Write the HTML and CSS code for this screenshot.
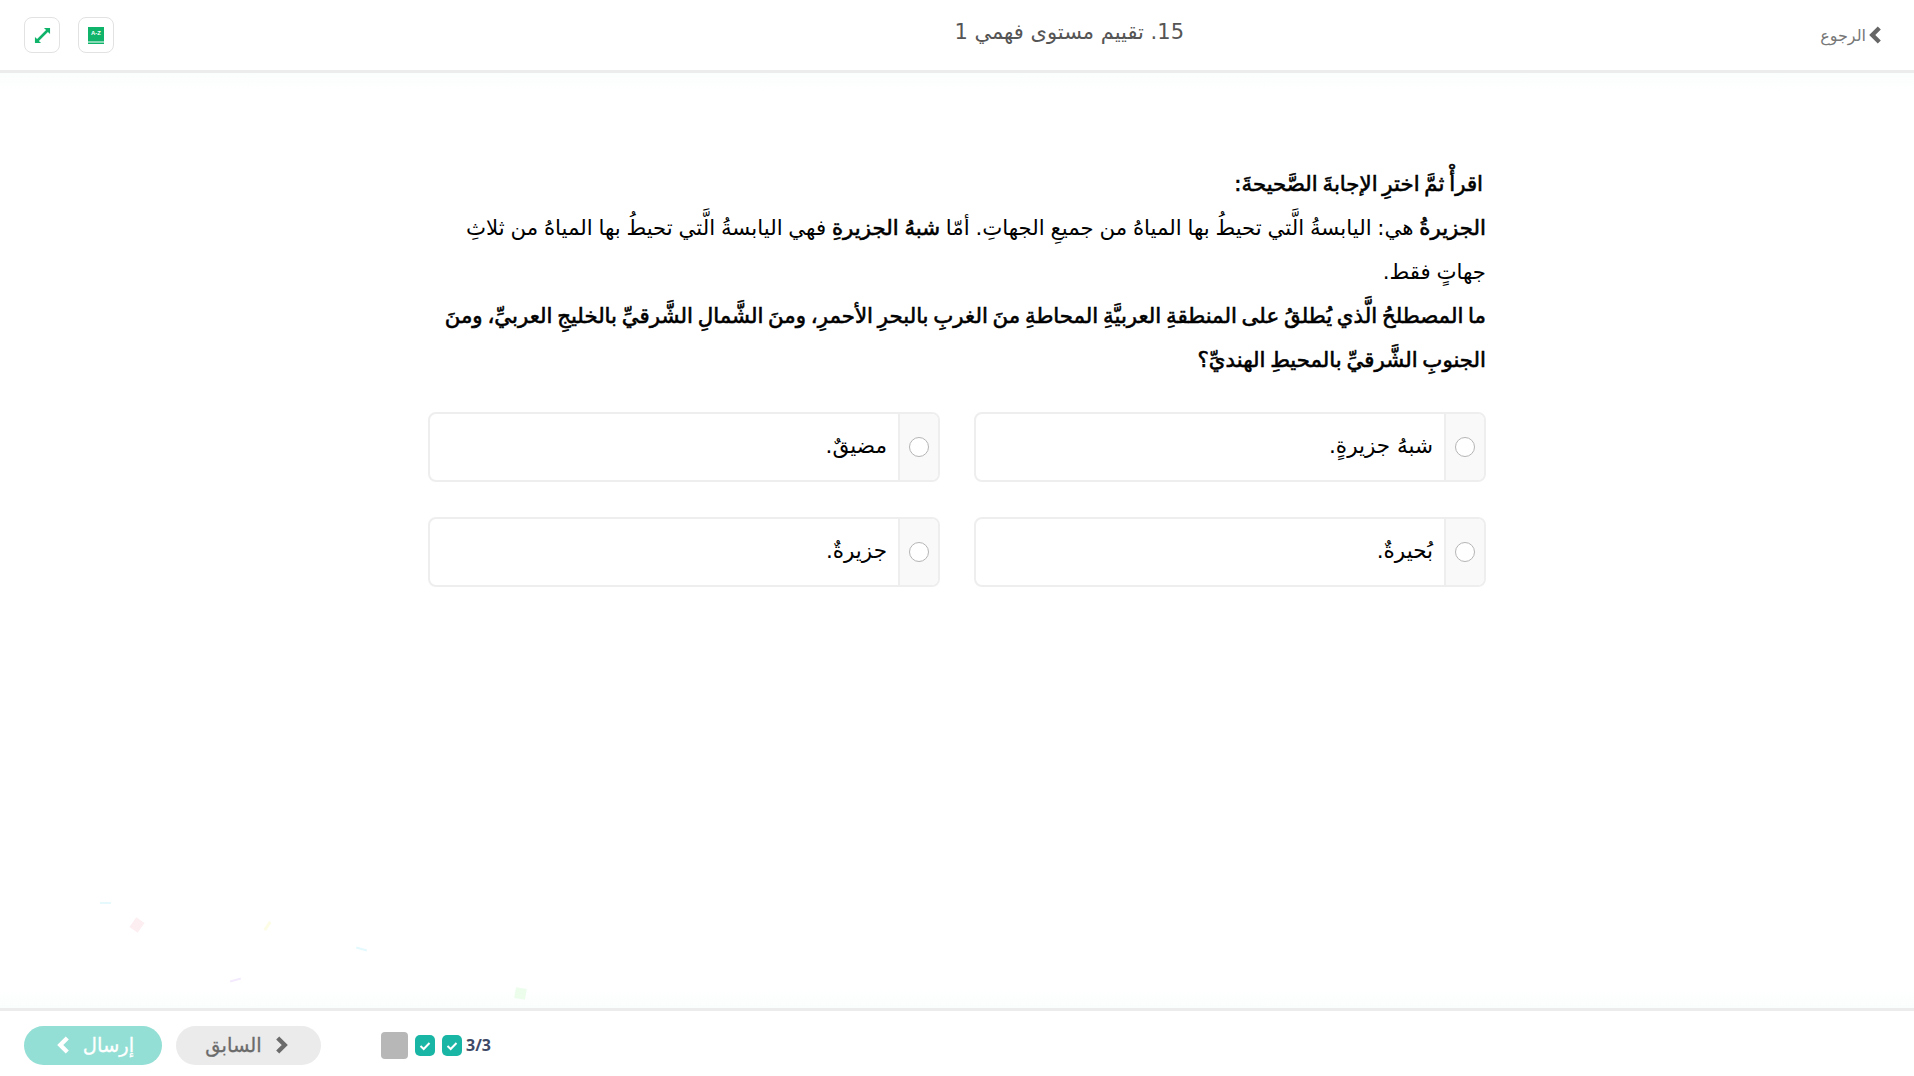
FILE: index.html
```html
<!DOCTYPE html>
<html lang="ar" dir="rtl">
<head>
    <meta charset="UTF-8">
    <title>15. تقييم مستوى فهمي 1</title>
    <link rel="stylesheet" href="styles.css">
</head>
<body>

    <header class="topbar">
        <a class="back-link" href="#">
            <svg class="back-chevron" viewBox="0 0 12 18"><path d="M9.500 2.500 3 9l6.500 6.500" /></svg>
            <span>الرجوع</span>
        </a>
        <h1 class="lesson-title">15. تقييم مستوى فهمي 1</h1>
        <div class="tools">
            <button class="tool-button">
                <svg viewBox="0 0 16 17" class="book-icon">
                    <rect x="0" y="0" width="16" height="14.500" />
                    <rect x="0" y="15.500" width="16" height="1.500" />
                </svg>
                <span class="book-label">A-Z</span>
            </button>
            <button class="tool-button">
                <svg viewBox="0 0 18 18" class="expand-icon">
                    <path d="M17 1v6.500l-2.300-2.300-9.500 9.500L7.500 17H1v-6.500l2.300 2.300 9.500-9.500L10.500 1z" />
                </svg>
            </button>
        </div>
    </header>

    <main class="stage">
        <section class="quiz">
            <div class="question">
                <p class="strong lead">اقرأْ ثمَّ اخترِ الإجابةَ الصَّحيحةَ:</p>
                <p><strong>الجزيرةُ</strong> هي: اليابسةُ الَّتي تحيطُ بها المياهُ من جميعِ الجهاتِ. أمّا <strong>شبهُ الجزيرةِ</strong> فهي اليابسةُ الَّتي تحيطُ بها المياهُ من ثلاثِ جهاتٍ فقط.</p>
                <p class="strong">ما المصطلحُ الَّذي يُطلقُ على المنطقةِ العربيَّةِ المحاطةِ منَ الغربِ بالبحرِ الأحمرِ، ومنَ الشَّمالِ الشَّرقيِّ بالخليجِ العربيِّ، ومنَ الجنوبِ الشَّرقيِّ بالمحيطِ الهنديِّ؟</p>
            </div>

            <div class="options">
                <label class="option">
                    <span class="radio-cell"><span class="radio"></span></span>
                    <span class="answer">شبهُ جزيرةٍ.</span>
                </label>
                <label class="option">
                    <span class="radio-cell"><span class="radio"></span></span>
                    <span class="answer">مضيقٌ.</span>
                </label>
                <label class="option">
                    <span class="radio-cell"><span class="radio"></span></span>
                    <span class="answer">بُحيرةٌ.</span>
                </label>
                <label class="option">
                    <span class="radio-cell"><span class="radio"></span></span>
                    <span class="answer">جزيرةٌ.</span>
                </label>
            </div>
        </section>

        <!-- faded confetti -->
        <i class="confetti c1"></i>
        <i class="confetti c2"></i>
        <i class="confetti c3"></i>
        <i class="confetti c4"></i>
        <i class="confetti c5"></i>
        <i class="confetti c6"></i>
    </main>

    <footer class="bottombar">
        <span class="count">3/3</span>
        <span class="check"><svg viewBox="0 0 20 20"><path d="M5.500 10.500 8.700 13.500 14.500 7.500" /></svg></span>
        <span class="check"><svg viewBox="0 0 20 20"><path d="M5.500 10.500 8.700 13.500 14.500 7.500" /></svg></span>
        <span class="current"></span>
        <button class="pill prev">
            <svg viewBox="0 0 12 18"><path d="M2.500 2.500 9 9l-6.500 6.500" /></svg>
            <span>السابق</span>
        </button>
        <button class="pill send">
            <span>إرسال</span>
            <svg viewBox="0 0 12 18"><path d="M9.500 2.500 3 9l6.500 6.500" /></svg>
        </button>
    </footer>

</body>
</html>
```

FILE: styles.css
```css
* {
    box-sizing: border-box;
}

body {
    margin: 0;
    height: 100vh;
    display: flex;
    flex-direction: column;
    overflow: hidden;
    background-color: #fff;
    color: #000;
    font-family: "DejaVu Sans", "Noto Sans", sans-serif;
}

.topbar {
    height: 73px;
    flex: none;
    display: grid;
    grid-template-columns: 706px auto 1fr;
    align-items: start;
    padding: 0 24px;
    border-bottom: 3px solid #ececec;
}

.back-link {
    display: flex;
    align-items: center;
    gap: 3px;
    height: 70px;
    margin-right: 8px;
    color: #777;
    font-size: 16px;
    text-decoration: none;
}

.back-chevron {
    width: 13px;
    height: 20px;
}

.back-chevron path {
    fill: none;
    stroke: #666;
    stroke-width: 4;
}

.lesson-title {
    margin: 19px 0 0;
    color: #555;
    font-size: 21px;
    font-weight: 400;
    line-height: 26px;
}

.tools {
    display: flex;
    gap: 18px;
    justify-content: flex-end;
    padding-top: 17px;
}

.tool-button {
    position: relative;
    width: 36px;
    height: 36px;
    padding: 0;
    display: flex;
    align-items: center;
    justify-content: center;
    background-color: #fff;
    border: 1px solid #e2e2e2;
    border-radius: 8px;
}

.book-icon {
    width: 16px;
    height: 17px;
    fill: #0fb36a;
}

.book-label {
    position: absolute;
    top: 11px;
    left: 0;
    right: 0;
    color: #fff;
    font-family: "Liberation Sans", sans-serif;
    font-size: 6px;
    font-weight: 700;
    line-height: 8px;
    text-align: center;
}

.expand-icon {
    width: 17px;
    height: 17px;
    fill: #0fb36a;
}

.stage {
    flex: 1;
    position: relative;
    background: linear-gradient(#fafefc, #fff 20px, #fff calc(100% - 20px), #fafefc);
}

.quiz {
    width: 1058px;
    margin: 0 auto;
    padding-top: 89px;
}

.question {
    font-size: 21.300px;
    line-height: 44px;
    word-spacing: -1px;
}

.question p {
    margin: 0;
}

/* the bold face of DejaVu runs too wide for these lines, so stroke the regular one */
.strong,
.question strong {
    font-weight: 400;
    -webkit-text-stroke: 0.6px #000;
}

.strong {
    word-spacing: -2px;
}

.lead {
    padding-right: 3px;
}

.options {
    display: grid;
    grid-template-columns: 1fr 1fr;
    column-gap: 34px;
    row-gap: 35px;
    margin-top: 30px;
}

.option {
    height: 70px;
    display: flex;
    align-items: stretch;
    background-color: #fff;
    border: 2px solid #eee;
    border-radius: 8px;
    overflow: hidden;
}

.radio-cell {
    width: 40px;
    flex: none;
    display: flex;
    align-items: center;
    justify-content: center;
    background-color: #f9f9f9;
    border-left: 2px solid #eee;
}

.radio {
    width: 20px;
    height: 20px;
    background-color: #fff;
    border: 1px solid #b5b5b5;
    border-radius: 50%;
}

.answer {
    display: flex;
    align-items: center;
    padding: 0 11px 4px 0;
    font-size: 21.500px;
}

.confetti {
    position: absolute;
    display: block;
}

.c1 { left: 132px; top: 846px; width: 10px; height: 12px; background-color: #fdeef1; transform: rotate(35deg); }
.c2 { left: 100px; top: 829px; width: 11px; height: 2px; background-color: #e6f9fd; }
.c3 { left: 266px; top: 848px; width: 3px; height: 10px; background-color: #fdfde6; transform: rotate(35deg); }
.c4 { left: 356px; top: 875px; width: 11px; height: 2px; background-color: #e3f9fd; transform: rotate(15deg); }
.c5 { left: 230px; top: 906px; width: 11px; height: 2px; background-color: #f4eafd; transform: rotate(-15deg); }
.c6 { left: 515px; top: 915px; width: 11px; height: 11px; background-color: #ecfdec; transform: rotate(10deg); }

.bottombar {
    height: 68px;
    flex: none;
    display: flex;
    align-items: center;
    justify-content: flex-end;
    padding: 3px 24px 0;
    background-color: #fff;
    border-top: 3px solid #ececec;
}

.count {
    margin-left: 4px;
    color: #3f4a66;
    font-family: "Open Sans", sans-serif;
    font-size: 16px;
    font-weight: 700;
    direction: ltr;
}

.check {
    width: 20px;
    height: 21px;
    margin-left: 7px;
    background-color: #19b5a5;
    border-radius: 5px;
}

.check svg {
    display: block;
    width: 20px;
    height: 21px;
    fill: none;
    stroke: #fff;
    stroke-width: 2;
}

.current {
    width: 27px;
    height: 27px;
    margin-left: 60px;
    background-color: #b7b7b7;
    border-radius: 4px;
}

.pill {
    height: 39px;
    display: flex;
    align-items: center;
    justify-content: center;
    gap: 13px;
    border: none;
    border-radius: 20px;
    font-family: inherit;
    font-size: 19.500px;
    -webkit-text-stroke: 0.3px currentColor;
}

.pill svg {
    width: 13px;
    height: 20px;
    fill: none;
    stroke-width: 4;
}

.prev {
    width: 145px;
    padding: 0 4px 0 0;
    margin-left: 14px;
    background-color: #ebebeb;
    color: #6b6b6b;
}

.prev svg {
    stroke: #6b6b6b;
}

.send {
    width: 138px;
    padding: 0 0 0 5px;
    background-color: #93dfd5;
    color: #fff;
}

.send svg {
    stroke: #fff;
}
```
